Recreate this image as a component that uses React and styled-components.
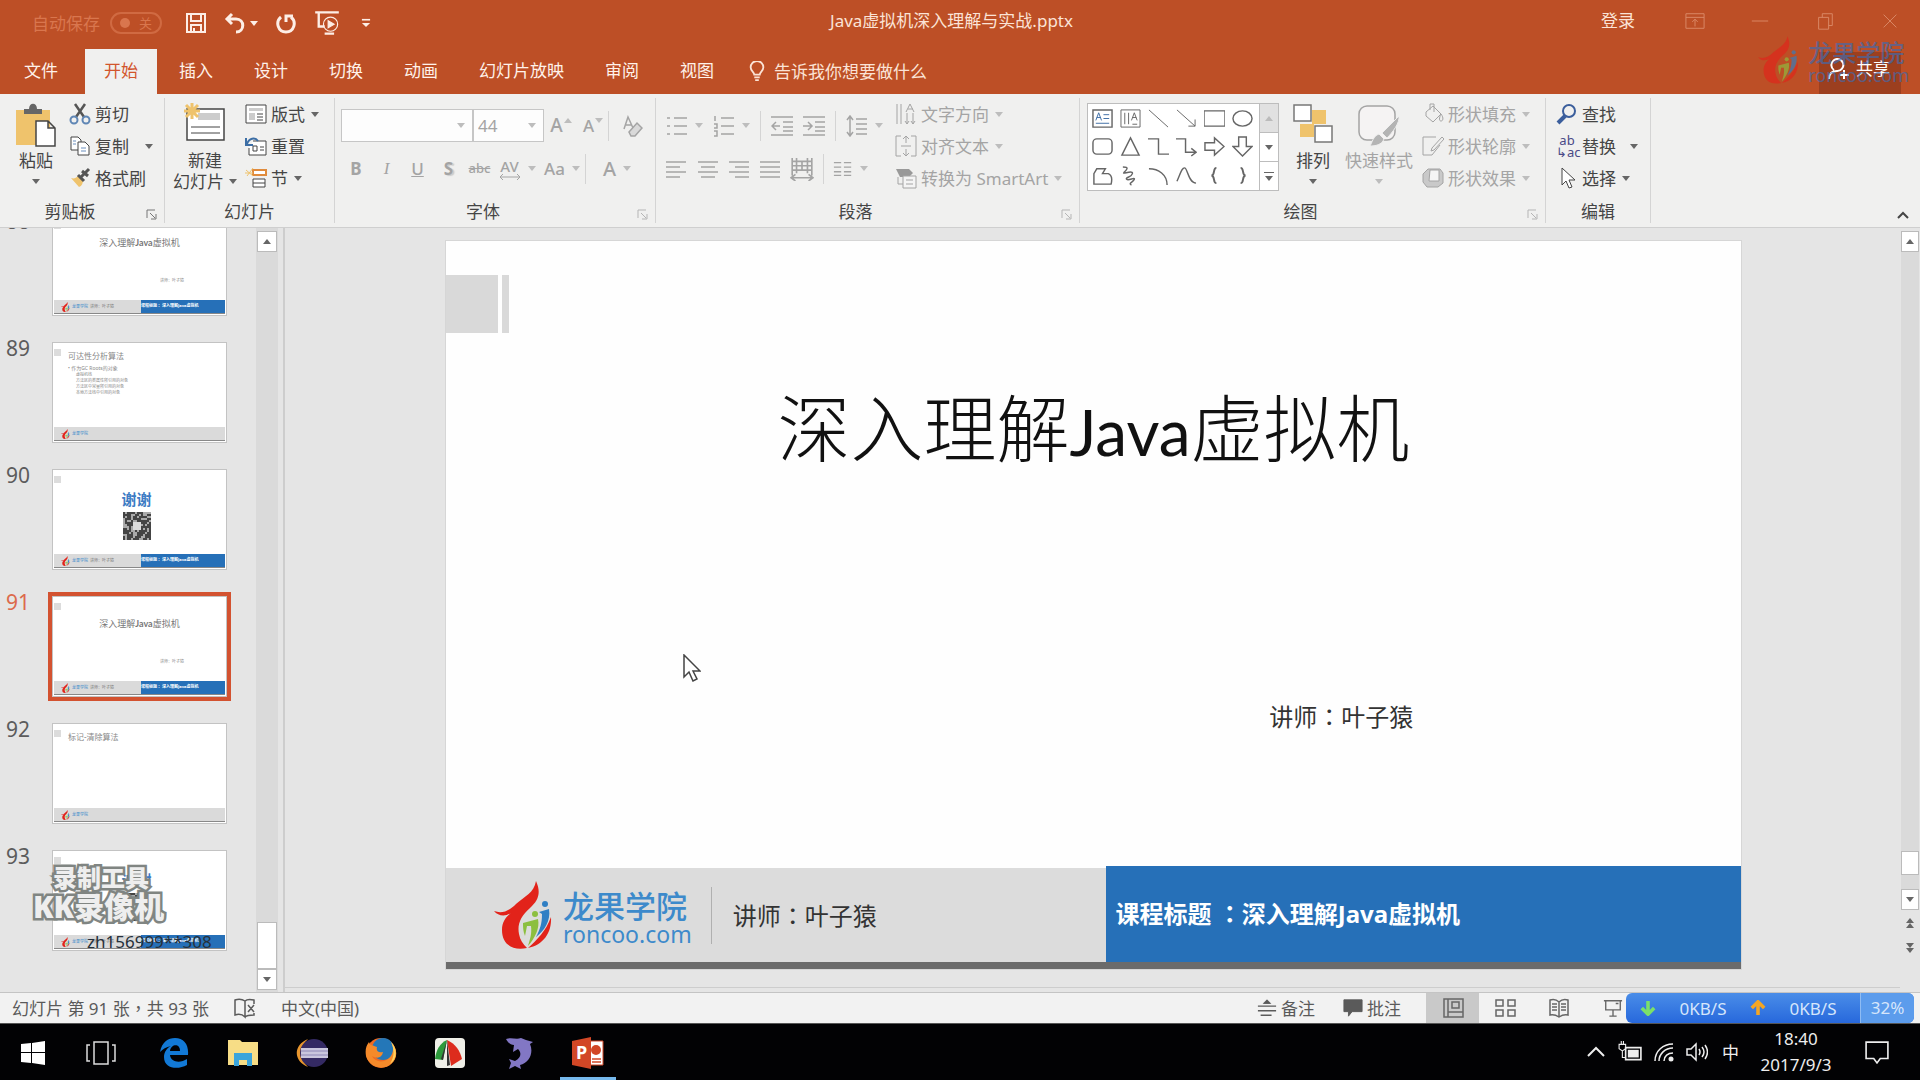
import React, {useState} from 'react';
import styled, {createGlobalStyle, css} from 'styled-components';

const COLOR = {
    ORANGE: "#bd4f26",
    RIBBON: "#f0f0ef",
    WORKSPACE: "#e5e5e5",
    TEXT: "#454545",
    DIM: "#a4a4a4",
    DIM_CARET: "#bdbdbd",
    LINE: "#d4d4d4",
    BLUE: "#2670b8",
    GOLD: "#efc36c",
};

const FONT = `"Noto Sans", "Noto Sans CJK SC", sans-serif`;

/* ---------- icons ---------- */

const ICONS = {
    save: <path d="M2 2h18v18H2zM6 2v7h10V2M6 20v-7h10v7M9 16v4" strokeWidth="2"/>,
    undo: <path d="M8 2L3 7l5 5M3 7h9c9 0 9 13 0 13" strokeWidth="3"/>,
    redo: <path d="M6 5c-6 5-3 15 5 15s11-10 5-15M11 10V4h7" strokeWidth="3"/>,
    show: <><path d="M1 2h20M4 2v12h5M9 20h8" strokeWidth="2"/><circle cx="14" cy="12" r="6"/><path d="M12 9l5 3-5 3z" fill="currentColor"/></>,
    more: <><path d="M6 7h10" strokeWidth="2"/><path d="M6 11h10l-5 5z" fill="currentColor" stroke="none"/></>,
    ribbonOptions: <path d="M1 3h20v16H1zM1 7h20M11 17v-8M8 12l3-3 3 3"/>,
    minimize: <path d="M2 11h18"/>,
    restore: <path d="M4 7h11v13H4zM8 7V3h11v13h-4"/>,
    close: <path d="M4 4l14 14M18 4L4 18"/>,
    bulb: <path d="M8 15c0-3-4-4-4-8a7 7 0 0114 0c0 4-4 5-4 8zM8 18h6M9 21h4" strokeWidth="2"/>,
    person: <path d="M1 21c0-6 4-8 8-8a6 6 0 10-3-1M12 17h9M16 12v9" strokeWidth="2"/>,
    cut: <><path d="M6 1l9 13M16 1L7 14" stroke="#555" strokeWidth="2.5"/><circle cx="5" cy="17" r="3.5" stroke="#5f86b5" strokeWidth="2"/><circle cx="17" cy="17" r="3.5" stroke="#5f86b5" strokeWidth="2"/></>,
    copy: <><path d="M2 2h7l3 3v10H2z" fill="#fff"/><path d="M9 7h7l4 4v9H9z" fill="#fff"/><path d="M4 6h3M4 9h3M12 13h5M12 16h5" stroke="#6b8fbd"/></>,
    brush: <><path d="M2 11l8 9c3-1 4-4 4-7l-5-4c-2 2-4 3-7 2z" fill={COLOR.GOLD} stroke="none"/><path d="M9 8l6 6M12 10l8-8M13 4l6 5" stroke="#555" strokeWidth="3"/></>,
    layout: <><path d="M1 2h20v18H1z" fill="#fff"/><path d="M4 5h14v3H4zM4 10h6v7H4z" fill="#ccc" stroke="none"/><path d="M12 11h6M12 14h6M12 17h6"/></>,
    reset: <><path d="M8 6h13v14H4v-7" fill="#fff"/><path d="M8 11h4v5H8zM15 12h4M15 15h4"/><path d="M1 3v7h7M2 9c2-6 8-7 11-3" stroke="#3c6ea5" strokeWidth="2"/></>,
    section: <><path d="M8 3h13v5H8z" fill="#fff" stroke="#e08b3c" strokeWidth="2"/><path d="M8 12h12v8H8zM8 16h12" fill="#fff"/><path d="M1 3l7 6M8 1L2 9M0 6h8" stroke={COLOR.GOLD}/></>,
    eraser: <><path d="M3 14L7 2l5 11M5 10h6" strokeWidth="1.5"/><path d="M8 17l8-9 5 5-7 8h-4z" fill="#d9d9d9" strokeWidth="1.5"/></>,
    bullets: <path d="M1 3h3M8 3h13M1 11h3M8 11h13M1 19h3M8 19h13" strokeWidth="1.5"/>,
    numbers: <path d="M2 1v5M1 9h3v4H1M1 16h3v5H1M8 3h13M8 11h13M8 19h13" strokeWidth="1.5"/>,
    outdent: <path d="M0 2h22M12 7h10M12 12h10M0 20h22M12 16h10M9 11H2M5 7l-4 4 4 4" strokeWidth="1.5"/>,
    indent: <path d="M0 2h22M12 7h10M12 12h10M0 20h22M12 16h10M0 11h8M5 7l4 4-4 4" strokeWidth="1.5"/>,
    spacing: <path d="M4 1v20M1 5l3-4 3 4M1 17l3 4 3-4M10 4h11M10 9h11M10 14h11M10 19h11" strokeWidth="1.5"/>,
    alignLeft: <path d="M0 4h20M0 9h14M0 14h20M0 19h14" strokeWidth="1.5"/>,
    alignCenter: <path d="M1 4h20M4 9h14M1 14h20M4 19h14" strokeWidth="1.5"/>,
    alignRight: <path d="M1 4h20M7 9h14M1 14h20M7 19h14" strokeWidth="1.5"/>,
    justify: <path d="M1 4h20M1 9h20M1 14h20M1 19h20" strokeWidth="1.5"/>,
    distribute: <path d="M2 1v16M20 1v16M2 4h18M2 8h18M2 12h18M6 1v14M16 1v14M11 4v8M1 19h20M5 16l-4 3 4 3M17 16l4 3-4 3" strokeWidth="1.5"/>,
    columns: <path d="M1 4h8M12 4h8M1 9h8M12 9h8M1 14h8M12 14h8M1 18h8M12 18h8" strokeWidth="1.5"/>,
    direction: <path d="M2 1v20M6 1v20M12 21V10M18 21V10M10 18l2 3 2-3M16 18l2 3 2-3M11 9l4-8 4 8M13 6h5"/>,
    alignText: <path d="M6 1H1v20h5M16 1h5v20h-5M11 1v7M8 4l3-3 3 3M11 14v7M8 18l3 3 3-3M6 11h10"/>,
    smartart: <><path d="M1 2h13l4 4-4 4H5z" fill="#999" stroke="none"/><path d="M8 9h13v12H8z" fill="#f4f4f4"/><path d="M3 10v7h5M11 13h7M11 17h7"/></>,
    fill: <path d="M4 9l7-6 8 8-8 8-7-6zM8 7V1h4v8M19 11c3 4 2 7 0 7s-2-3 0-7"/>,
    outline: <path d="M14 2H1v18h9l8-10M10 13L20 2l2 2-10 11-3 1z"/>,
    effect: <><path d="M6 2h12l3 4v10l-5 4H5l-4-5V7z" fill="#c9c9c9"/><path d="M8 3h9v11H7z" fill="#f5f5f5"/></>,
    find: <><circle cx="13" cy="8" r="6" stroke="#3b5e9c" strokeWidth="2"/><path d="M9 13l-7 7" stroke="#3b5e9c" strokeWidth="4"/></>,
    select: <path d="M6 1v17l4-4 3 7 3-1-3-7h6z" fill="#fff"/>,
    notes: <><path d="M1 9h20M1 14h20M4 19h12" strokeWidth="1.5"/><path d="M7 6l4-4 4 4z" fill="currentColor"/></>,
    comment: <path d="M1 2h20v13H10l-4 5v-5H1z" fill="currentColor"/>,
    spell: <path d="M11 4C8 2 4 2 1 3v15c3-1 7-1 10 2V4c2-2 5-2 9-1v4M11 20c2-2 5-2 9-2v-2M14 8l6 7M20 8l-6 7" strokeWidth="1.5"/>,
    normal: <path d="M2 2h19v18H2zM6 2v18M6 15h15M10 5h7v6h-7z" strokeWidth="1.5"/>,
    sorter: <path d="M1 3h7v6H1zM13 3h7v6h-7zM1 13h7v6H1zM13 13h7v6h-7z" strokeWidth="1.5"/>,
    reading: <path d="M11 5C8 2 5 2 2 3v15c4-1 6 0 9 2 3-2 5-3 9-2V3c-3-1-6-1-9 2v15M4 7h5M4 10h5M4 13h5M13 7h5M13 10h5M13 13h5" strokeWidth="1.5"/>,
    present: <path d="M1 3h20M3 3v10h16V3M11 13v7M7 20h8M14 6h3" strokeWidth="1.5"/>,
    up: <path d="M3 15l8-8 8 8" strokeWidth="2"/>,
    battery: <><path d="M7 7h14v11H7z" strokeWidth="1.5"/><path d="M9 9h10v7H9z" fill="currentColor" stroke="none"/><path d="M1 4h6v4l-3 2-3-2zM3 1v3M5 1v3M4 10v6h3"/></>,
    wifi: <><path d="M2 20C2 10 10 3 20 3M6 20c0-7 6-13 14-13M11 20c0-5 4-8 9-8" strokeWidth="1.5"/><circle cx="18" cy="18" r="2.5" fill="currentColor" stroke="none"/></>,
    volume: <path d="M1 8h4l5-5v16l-5-5H1zM13 8q2 3 0 6M16 6q4 5 0 10M19 4q5 7 0 14" strokeWidth="1.5"/>,
    notice: <path d="M1 2h20v15h-7l-3 4-3-4H1z" strokeWidth="1.5"/>,
    textBox: <><path d="M1 2h20v18H1z" strokeWidth="1.5"/><path d="M4 13l3-8 3 8M5 10h4M12 7h6M12 11h6M4 16h14" stroke="#3d6ca5"/></>,
    verticalBox: <path d="M1 2h20v18H1zM5 5v12M9 5v12M12 13l3-8 3 8M13 10h4M13 17h5"/>,
    line: <path d="M1 2l20 18"/>,
    arrowLine: <path d="M1 2l19 17M20 12v7h-7"/>,
    rect: <path d="M0 3h22v16H0z" strokeWidth="1.5"/>,
    oval: <ellipse cx="11" cy="11" rx="10" ry="8" strokeWidth="1.5"/>,
    roundRect: <rect x="1" y="3" width="20" height="16" rx="4" strokeWidth="1.5"/>,
    triangle: <path d="M11 2l9 18H2z" strokeWidth="1.5"/>,
    elbow: <path d="M0 3h11v16h11" strokeWidth="1.5"/>,
    elbowArrow: <path d="M0 3h10v14h11M16 13l5 4-5 4" strokeWidth="1.5"/>,
    rightArrow: <path d="M1 7h10V2l10 9-10 9v-5H1z" strokeWidth="1.5"/>,
    downArrow: <path d="M7 1h8v10h6L11 21 1 11h6z" strokeWidth="1.5"/>,
    freeform: <path d="M5 4h9l-3 5h6c5 2 4 7 3 11H2V9z" strokeWidth="1.5"/>,
    scribble: <path d="M3 2c8 0 3 4 1 6s10-3 9 1-8 4-6 6 9-3 8 0-7 4-3 6" strokeWidth="1.5"/>,
    arc: <path d="M1 4c10 0 19 6 19 17" strokeWidth="1.5"/>,
    curve: <path d="M1 17C5 8 6 3 9 3s4 16 12 16" strokeWidth="1.5"/>,
    braceLeft: <path d="M13 3c-4 0-1 7-5 8 4 1 1 8 5 8" strokeWidth="2"/>,
    braceRight: <path d="M9 3c4 0 1 7 5 8-4 1-1 8-5 8" strokeWidth="2"/>,
};

const Svg = styled.svg`
  display: block;
  flex: none;
  fill: none;
  stroke: currentColor;
`

function Icon({name, size = 22}) {
    return <Svg viewBox="0 0 22 22" width={size} height={size} aria-hidden="true">{ICONS[name]}</Svg>;
}

function Caret({flip}) {
    return (
        <Svg className="caret" viewBox="0 0 8 5" width="8" height="5" aria-hidden="true">
            <path d={flip ? "M0 5h8L4 0z" : "M0 0h8L4 5z"} fill="currentColor" stroke="none"/>
        </Svg>
    );
}

function Flame({width, height}) {
    return (
        <Svg viewBox="0 0 60 68" width={width} height={height} aria-hidden="true">
            <path d="M42 0c5 11 3 19-6 27C27 35 23 43 25 53c1 6 4 10 8 14-15 3-25-4-25-18 0-8 4-13 9-17-6 4-13 3-17-2 8 3 15 0 22-7C31 15 40 12 42 0z" fill="#e2231a" stroke="none"/>
            <path d="M57 36c1 16-8 28-23 31 9-8 18-17 23-31z" fill="#e2231a" stroke="none"/>
            <circle cx="51" cy="23" r="3" fill="#2f7fc4" stroke="none"/>
            <path d="M45 31l10-3c2 12-5 22-13 28 4-8 6-13 6-23z" fill="#2f7fc4" stroke="none"/>
            <circle cx="41" cy="33" r="3" fill="#8cbf3f" stroke="none"/>
            <path d="M29 42l15-4c2 9-3 19-10 27 2-7 4-12 3-20h-4l-2 10c-2-5-2-9-2-13z" fill="#8cbf3f" stroke="none"/>
        </Svg>
    );
}

const PasteIcon = () => (
    <Svg viewBox="0 0 42 44" width="42" height="44" aria-hidden="true">
        <path d="M1 7h34v35H1z" fill={COLOR.GOLD} stroke="none"/>
        <path d="M9 11V6h5c0-7 8-7 8 0h5v5z" fill="#666" stroke="none"/>
        <path d="M21 18h12l7 7v18H21zM33 18v7h7" fill="#fff" strokeWidth="1.5"/>
    </Svg>
);

const NewSlideIcon = () => (
    <Svg viewBox="0 0 42 44" width="42" height="44" aria-hidden="true">
        <path d="M3 6h37v31H3z" fill="#fff" strokeWidth="1.5"/>
        <path d="M14 10h22v7H14z" fill="#ccc" stroke="none"/>
        <path d="M7 24h29M7 30h29"/>
        <path d="M8 0v16M0 8h16M2 2l12 12M14 2L2 14" stroke={COLOR.GOLD} strokeWidth="3"/>
    </Svg>
);

const ArrangeIcon = () => (
    <Svg viewBox="0 0 42 44" width="42" height="44" aria-hidden="true">
        <path d="M20 7h14v14H20zM8 21h14v13H8z" fill={COLOR.GOLD} stroke="none"/>
        <path d="M2 2h17v16H2zM23 23h17v16H23z" fill="#fff" stroke="#777" strokeWidth="1.5"/>
    </Svg>
);

const StyleIcon = () => (
    <Svg viewBox="0 0 42 44" width="42" height="44" aria-hidden="true">
        <rect x="1" y="3" width="36" height="34" rx="8" fill="#f5f3f3" strokeWidth="1.5"/>
        <path d="M12 43c2-3 3-10 9-12l5 5c-2 6-9 7-14 7zM24 30l17-17c1 7-7 17-12 22z" fill="#b4b4b4" stroke="#eee"/>
    </Svg>
);

/* ---------- title bar and tabs ---------- */

const TABS = ["文件", "开始", "插入", "设计", "切换", "动画", "幻灯片放映", "审阅", "视图"];

function Header() {
    const [tab, setTab] = useState("开始");

    return (
        <HeaderBar>
            <TitleRow>
                <QuickAccess>
                    <AutoSave>
                        自动保存
                        <span className="frame"><input type="checkbox"/><small>关</small></span>
                    </AutoSave>
                    <QuickButton aria-label="保存"><Icon name="save"/></QuickButton>
                    <QuickButton aria-label="撤消"><Icon name="undo"/><Caret/></QuickButton>
                    <QuickButton aria-label="重复"><Icon name="redo"/></QuickButton>
                    <QuickButton aria-label="从头开始"><Icon name="show" size={26}/></QuickButton>
                    <QuickButton aria-label="自定义"><Icon name="more" size={18}/></QuickButton>
                </QuickAccess>
                <FileName>Java虚拟机深入理解与实战.pptx</FileName>
                <WindowControls>
                    <a href="#login">登录</a>
                    <button aria-label="功能区选项"><Icon name="ribbonOptions" size={20}/></button>
                    <button aria-label="最小化"><Icon name="minimize" size={20}/></button>
                    <button aria-label="还原"><Icon name="restore" size={20}/></button>
                    <button aria-label="关闭"><Icon name="close" size={20}/></button>
                </WindowControls>
            </TitleRow>
            <TabRow>
                {TABS.map(name => (
                    <Tab key={name} $active={name === tab} onClick={() => setTab(name)}>{name}</Tab>
                ))}
                <TellMe><Icon name="bulb" size={20}/>告诉我你想要做什么</TellMe>
                <Share><Icon name="person"/>共享</Share>
            </TabRow>
            <CornerMark>
                <Flame width={42} height={48}/>
                <div><b>龙果学院</b><i>roncoo.com</i></div>
            </CornerMark>
        </HeaderBar>
    );
}

/* ---------- ribbon ---------- */

function Command({icon, label, caret, gap, dim}) {
    return (
        <CommandButton $dim={dim} $gap={gap}>
            {icon === "replace" ? <ReplaceMark><span>ab</span><span>↳ac</span></ReplaceMark> : <Icon name={icon}/>}
            <span>{label}</span>
            {caret && <Caret/>}
        </CommandButton>
    );
}

function Group({label, width, start, launcher, dimLauncher, children}) {
    return (
        <GroupBox $width={width}>
            <GroupBody $start={start}>{children}</GroupBody>
            <GroupFoot>
                <span>{label}</span>
                {launcher && (
                    <Launcher $dim={dimLauncher} aria-label={label + "设置"}>
                        <Svg viewBox="0 0 11 11" width="11" height="11"><path d="M1 9V1h8M4 4l5 5M10 5v5H5"/></Svg>
                    </Launcher>
                )}
            </GroupFoot>
        </GroupBox>
    );
}

const SHAPES = [
    "textBox", "verticalBox", "line", "arrowLine", "rect", "oval",
    "roundRect", "triangle", "elbow", "elbowArrow", "rightArrow", "downArrow",
    "freeform", "scribble", "arc", "curve", "braceLeft", "braceRight",
];

function Ribbon() {
    return (
        <RibbonBar>
            <Group label="剪贴板" width={165} start={12} launcher>
                <BigButton $width={48}><PasteIcon/><span>粘贴</span><span><Caret/></span></BigButton>
                <CommandList $start={9}>
                    <Command icon="cut" label="剪切"/>
                    <Command icon="copy" label="复制" caret gap={12}/>
                    <Command icon="brush" label="格式刷"/>
                </CommandList>
            </Group>
            <Group label="幻灯片" width={170} start={7}>
                <BigButton $width={66}><NewSlideIcon/><span>新建</span><span>幻灯片<Caret/></span></BigButton>
                <CommandList $start={7}>
                    <Command icon="layout" label="版式" caret/>
                    <Command icon="reset" label="重置"/>
                    <Command icon="section" label="节" caret/>
                </CommandList>
            </Group>
            <Group label="字体" width={321} start={6} launcher dimLauncher>
                <ToolRows>
                    <ToolRow>
                        <Combo $width={132}><select aria-label="字体" disabled><option></option></select><Caret/></Combo>
                        <Combo $width={71}><select aria-label="字号" disabled><option>44</option></select><Caret/></Combo>
                        <Tool $width={34} aria-label="增大字号"><Letter $size={19}>A</Letter><sup><Caret flip/></sup></Tool>
                        <Tool $width={30} aria-label="减小字号"><Letter $size={17}>A</Letter><sup><Caret/></sup></Tool>
                        <Divider/>
                        <Tool $width={46} aria-label="清除格式"><Icon name="eraser"/></Tool>
                    </ToolRow>
                    <ToolRow>
                        <Tool $width={30} aria-label="加粗"><Letter $size={17} $bold>B</Letter></Tool>
                        <Tool $width={31} aria-label="倾斜"><Letter $size={17} $italic>I</Letter></Tool>
                        <Tool $width={31} aria-label="下划线"><Letter $size={17} $line="underline">U</Letter></Tool>
                        <Tool $width={31} aria-label="阴影"><Letter $size={17} $bold $shadow>S</Letter></Tool>
                        <Tool $width={31} aria-label="删除线"><Letter $size={13} $line="line-through">abc</Letter></Tool>
                        <Tool $width={44} aria-label="字符间距">
                            <SpacingMark>
                                <Letter $size={15}>AV</Letter>
                                <Svg viewBox="0 0 22 6" width="22" height="6"><path d="M1 3h20M4 0L1 3l3 3M18 0l3 3-3 3"/></Svg>
                            </SpacingMark>
                            <Caret/>
                        </Tool>
                        <Tool $width={46} aria-label="更改大小写"><Letter $size={17}>Aa</Letter><Caret/></Tool>
                        <Divider/>
                        <Tool $width={62} aria-label="字体颜色"><Letter $size={20}>A</Letter><Caret/></Tool>
                    </ToolRow>
                </ToolRows>
            </Group>
            <Group label="段落" width={424} start={10} launcher dimLauncher>
                <ToolRows>
                    <ToolRow $gap={10}>
                        <Tool aria-label="项目符号"><Icon name="bullets"/><Caret/></Tool>
                        <Tool aria-label="编号"><Icon name="numbers"/><Caret/></Tool>
                        <Divider/>
                        <Tool aria-label="降低列表级别"><Icon name="outdent"/></Tool>
                        <Tool aria-label="提高列表级别"><Icon name="indent"/></Tool>
                        <Divider/>
                        <Tool aria-label="行距"><Icon name="spacing"/><Caret/></Tool>
                    </ToolRow>
                    <ToolRow $gap={9}>
                        <Tool aria-label="左对齐"><Icon name="alignLeft"/></Tool>
                        <Tool aria-label="居中"><Icon name="alignCenter"/></Tool>
                        <Tool aria-label="右对齐"><Icon name="alignRight"/></Tool>
                        <Tool aria-label="两端对齐"><Icon name="justify"/></Tool>
                        <Tool aria-label="分散对齐"><Icon name="distribute" size={24}/></Tool>
                        <Divider/>
                        <Tool aria-label="分栏"><Icon name="columns" size={20}/><Caret/></Tool>
                    </ToolRow>
                </ToolRows>
                <CommandList $start={12}>
                    <Command icon="direction" label="文字方向" caret dim/>
                    <Command icon="alignText" label="对齐文本" caret dim/>
                    <Command icon="smartart" label="转换为 SmartArt" caret dim/>
                </CommandList>
            </Group>
            <Group label="绘图" width={466} start={7} launcher dimLauncher>
                <Gallery>
                    <div className="shapes">
                        {SHAPES.map(name => <button key={name} aria-label={name}><Icon name={name} size={21}/></button>)}
                    </div>
                    <div className="scroll">
                        <button aria-label="上一行" disabled><Caret flip/></button>
                        <button aria-label="下一行"><Caret/></button>
                        <button aria-label="其他形状"><hr/><Caret/></button>
                    </div>
                </Gallery>
                <BigButton $width={68}><ArrangeIcon/><span>排列</span><span><Caret/></span></BigButton>
                <BigButton $width={64} $dim><StyleIcon/><span>快速样式</span><span><Caret/></span></BigButton>
                <CommandList $start={11}>
                    <Command icon="fill" label="形状填充" caret dim/>
                    <Command icon="outline" label="形状轮廓" caret dim/>
                    <Command icon="effect" label="形状效果" caret dim/>
                </CommandList>
            </Group>
            <Group label="编辑" width={105} start={5}>
                <CommandList $start={5}>
                    <Command icon="find" label="查找"/>
                    <Command icon="replace" label="替换" caret gap={10}/>
                    <Command icon="select" label="选择" caret/>
                </CommandList>
            </Group>
            <Collapse aria-label="折叠功能区">
                <Svg viewBox="0 0 12 8" width="12" height="8"><path d="M1 7l5-5 5 5" strokeWidth="2"/></Svg>
            </Collapse>
        </RibbonBar>
    );
}

/* ---------- slides ---------- */

const SLIDES = [
    {no: 88, kind: "cover"},
    {
        no: 89, kind: "text", title: "可达性分析算法", lead: "作为GC Roots的对象",
        lines: ["虚拟机栈", "方法区的类属性所引用的对象", "方法区中常量所引用的对象", "本地方法栈中引用的对象"],
    },
    {no: 90, kind: "thanks"},
    {no: 91, kind: "cover"},
    {no: 92, kind: "text", title: "标记-清除算法"},
    {no: 93, kind: "thanks"},
];

// fixed pattern for the little code picture
const QR = Array.from({length: 196}, (_, i) => i).filter(i => (i * 7 + (i >> 2) * 5 + (i % 13) * (i % 5)) % 9 < 6);

// full-width punctuation that sits in the middle of its cell
function Mid({children}) {
    return <Centred lang="zh-TW">{children}</Centred>;
}

function Thumb({slide}) {
    return (
        <>
            <ThumbMark/>
            {slide.kind === "cover" && <><CoverTitle>深入理解<b>Java</b>虚拟机</CoverTitle><CoverBy>讲师：叶子猿</CoverBy></>}
            {slide.kind === "text" && (
                <TextSlide>
                    <h4>{slide.title}</h4>
                    {slide.lead && <p>• {slide.lead}</p>}
                    {slide.lines && <ul>{slide.lines.map(line => <li key={line}>{line}</li>)}</ul>}
                </TextSlide>
            )}
            {slide.kind === "thanks" && (
                <Thanks>
                    <b>谢谢</b>
                    <Svg viewBox="0 0 14 14" width="28" height="28">
                        <path d="M0 0h14v14H0z" fill="#aaa" stroke="none"/>
                        {QR.map(i => <rect key={i} x={i % 14} y={Math.floor(i / 14)} width="1" height="1" fill="#444" stroke="none"/>)}
                        <path d="M5 5h4v4H5z" fill="#ddd" stroke="none"/>
                    </Svg>
                </Thanks>
            )}
            <ThumbFoot>
                <Flame width={9} height={10}/>
                <em>龙果学院</em>
                {slide.kind !== "text" && <><span>讲师：叶子猿</span><strong>课程标题 ：深入理解Java虚拟机</strong></>}
            </ThumbFoot>
        </>
    );
}

function Workspace() {
    const [current, setCurrent] = useState(91);

    return (
        <Main>
            <ThumbPane>
                {SLIDES.map(slide => (
                    <ThumbRow key={slide.no} $active={slide.no === current}>
                        <span>{slide.no}</span>
                        <ThumbButton $active={slide.no === current} aria-label={"幻灯片 " + slide.no}
                                     onClick={() => setCurrent(slide.no)}>
                            <Thumb slide={slide}/>
                        </ThumbButton>
                    </ThumbRow>
                ))}
                <Recorder>
                    <span>录制工具</span>
                    <strong>KK录像机</strong>
                    <small>zh156999**308</small>
                </Recorder>
            </ThumbPane>
            <ScrollBar $width={22}>
                <button aria-label="向上滚动"><Caret flip/></button>
                <i/>
                <b/>
                <button aria-label="向下滚动"><Caret/></button>
            </ScrollBar>
            <Splitter/>
            <Stage>
                <Slide>
                    <SlideMark><i/><i/></SlideMark>
                    <SlideTitle>深入理解<span>Java</span>虚拟机</SlideTitle>
                    <Lecturer>讲师<Mid>：</Mid>叶子猿</Lecturer>
                    <SlideFoot>
                        <FootLeft>
                            <Flame width={60} height={68}/>
                            <Brand><b>龙果学院</b><span>roncoo.com</span></Brand>
                            <p>讲师<Mid>：</Mid>叶子猿</p>
                        </FootLeft>
                        <FootRight>课程标题 <Mid>：</Mid>深入理解Java虚拟机</FootRight>
                    </SlideFoot>
                </Slide>
                <Pointer viewBox="0 0 18 28" width="18" height="28">
                    <path d="M1 1v22l5-5 4 9 4-2-4-8h7z" fill="#fff" stroke="#444" strokeWidth="1.5"/>
                </Pointer>
            </Stage>
            <ScrollBar $width={20} $paged>
                <button aria-label="向上滚动"><Caret flip/></button>
                <i/>
                <b/>
                <u/>
                <button aria-label="向下滚动"><Caret/></button>
                <button className="page" aria-label="上一张幻灯片"><Caret flip/><Caret flip/></button>
                <button className="page" aria-label="下一张幻灯片"><Caret/><Caret/></button>
            </ScrollBar>
        </Main>
    );
}

/* ---------- bottom bars ---------- */

function Arrow({down}) {
    return (
        <Svg viewBox="0 0 18 18" width="16" height="16" aria-hidden="true">
            <path d={down ? "M9 1v15M2 9l7 7 7-7" : "M9 17V2M2 9l7-7 7 7"} stroke={down ? "#7be06a" : "#f5a623"} strokeWidth="4"/>
        </Svg>
    );
}

function Footer() {
    return (
        <StatusBar>
            <StatusText>幻灯片 第 91 张<Mid>，</Mid>共 93 张</StatusText>
            <StatusButton aria-label="拼写检查"><Icon name="spell"/></StatusButton>
            <StatusText>中文(中国)</StatusText>
            <StatusTools>
                <StatusButton><Icon name="notes" size={20}/>备注</StatusButton>
                <StatusButton><Icon name="comment" size={20}/>批注</StatusButton>
            </StatusTools>
            <Views>
                <button className="on" aria-label="普通视图"><Icon name="normal"/></button>
                <button aria-label="幻灯片浏览"><Icon name="sorter"/></button>
                <button aria-label="阅读视图"><Icon name="reading"/></button>
                <button aria-label="幻灯片放映"><Icon name="present" size={20}/></button>
            </Views>
            <NetMeter>
                <Arrow down/><span>0KB/S</span>
                <Arrow/><span>0KB/S</span>
                <b>32%</b>
            </NetMeter>
        </StatusBar>
    );
}

const APPS = {
    "任务视图": <path d="M9 5h14v22H9zM5 8H2v16h3M27 8h3v16h-3" stroke="#ddd" strokeWidth="1.5"/>,
    Edge: <path d="M2 15C4 5 10 1 17 1c9 0 14 7 13 17H12c1 8 11 8 17 4v6c-9 5-23 4-23-8 0-5 3-9 7-11-5 1-8 3-11 6zm10-1h10c0-8-9-7-10 0z" fill="#1279d6" stroke="none" fillRule="evenodd"/>,
    "资源管理器": <>
        <path d="M1 3h12l2 2h16v23H1z" fill="#f7dd86" stroke="none"/>
        <path d="M7 16h18v13h-5v-6h-8v6H7z" fill="#3ba5dc" stroke="none"/>
    </>,
    Eclipse: <>
        <path d="M12 2C-3 8-3 24 12 30 3 22 3 10 12 2z" fill="#e8962e" stroke="none"/>
        <circle cx="18" cy="16" r="14" fill="#342a63" stroke="none"/>
        <path d="M5 11h27v10H5z" fill="#c9c6dd" stroke="none"/>
        <path d="M5 14h27M5 18h27" stroke="#8c86b5"/>
    </>,
    Firefox: <>
        <circle cx="16" cy="16" r="15" fill="#ef6a22" stroke="none"/>
        <circle cx="18" cy="12" r="11" fill="#2477b8" stroke="none"/>
        <path d="M4 5c1 4 4 3 8 5-1 4 1 6 6 5-1 6-6 7-11 4 4 8 16 7 20-2 2-5 1-9-1-12 7 7 7 16 0 22-8 7-22 3-25-8-1-6 0-10 3-14z" fill="#f58a2a" stroke="none"/>
        <path d="M26 5c7 7 6 17-1 22 4-7 5-13 1-22z" fill="#ffd25e" stroke="none"/>
    </>,
    FastStone: <>
        <rect x="1" y="1" width="30" height="30" rx="4" fill="#efefe8" stroke="none"/>
        <path d="M13 3C6 6 2 13 1 22l8 1z" fill="#2d9a3c" stroke="none"/>
        <path d="M13 3c9 4 13 11 15 19l-11 7z" fill="#dd2c1d" stroke="none"/>
        <path d="M13 3L9 23l-2-1zM13 3v26l3-1z" fill="#333" stroke="none"/>
    </>,
    "海豚": <path d="M3 2c6-2 10 1 15-1l5 2 7 2-3 2c4 9-1 19-10 21l1 4-6-3-6 3 2-6-2-4 6 2c6-3 7-8 3-12l-5 3 1-7C8 8 5 6 3 2z" fill="#8277c4" stroke="none"/>,
    PowerPoint: <>
        <path d="M16 4h15v24H16z" fill="#fff" stroke="#d24726"/>
        <path d="M20 22h9M20 25h9" stroke="#d24726" strokeWidth="1.5"/>
        <circle cx="24" cy="13" r="5" fill="#d24726" stroke="none"/>
        <path d="M0 4l19-4v32L0 28z" fill="#d24726" stroke="none"/>
        <text x="4" y="22" fill="#fff" stroke="none" fontSize="18" fontWeight="700">P</text>
    </>,
};

function TaskBar() {
    return (
        <Task>
            <AppButton $width={66} aria-label="开始">
                <Svg viewBox="0 0 24 24" width="24" height="24">
                    <path d="M0 3l10-1v9H0zM11 2l13-2v11H11zM0 12h10v10L0 21zM11 12h13v12l-13-2z" fill="#fff" stroke="none"/>
                </Svg>
            </AppButton>
            {Object.keys(APPS).map((name, idx) => (
                <AppButton key={name} $width={idx ? 69 : 70} $first={!idx} $open={name === "PowerPoint"} aria-label={name}>
                    <Svg viewBox="0 0 32 32" width="32" height="32">{APPS[name]}</Svg>
                </AppButton>
            ))}
            <Tray>
                <Icon name="up"/>
                <Icon name="battery" size={24}/>
                <Icon name="wifi"/>
                <Icon name="volume"/>
                <span>中</span>
                <time>18:40<br/>2017/9/3</time>
                <Icon name="notice" size={24}/>
            </Tray>
        </Task>
    );
}

function App() {
    return (
        <Page lang="zh-CN">
            <GlobalStyle/>
            <Header/>
            <Ribbon/>
            <Workspace/>
            <Footer/>
            <TaskBar/>
        </Page>
    );
}

const GlobalStyle = createGlobalStyle`
  * {
    box-sizing: border-box;
  }

  body {
    margin: 0;
    overflow: hidden;
  }

  button, select, input {
    font: inherit;
    color: inherit;
    background: none;
    border: 0;
    padding: 0;
    margin: 0;
  }

  p, h1, h4, ul {
    margin: 0;
    padding: 0;
  }

  a {
    color: inherit;
    text-decoration: none;
  }
`

const Page = styled.div`
  height: 100vh;
  display: flex;
  flex-direction: column;
  overflow: hidden;
  font-family: ${FONT};
  font-size: 17px;
  line-height: 21px;
  color: ${COLOR.TEXT};
  white-space: nowrap;
`

const Centred = styled.span`
  font-family: "Noto Sans CJK TC", sans-serif;
`

const HeaderBar = styled.header`
  flex: none;
  position: relative;
  background: ${COLOR.ORANGE};
  color: #fbe3d6;
`

const TitleRow = styled.div`
  height: 49px;
  padding-bottom: 8px;
  display: grid;
  grid-template-columns: 1fr auto 1fr;
  align-items: center;
`

const QuickAccess = styled.div`
  display: flex;
  align-items: center;
  gap: 17px;
  padding: 5px 0 0 32px;
`

const AutoSave = styled.label`
  display: flex;
  align-items: center;
  gap: 10px;
  margin-right: 6px;
  color: #d9764e;

  .frame {
    width: 52px;
    height: 22px;
    padding: 0 8px;
    border: 2px solid #d06a42;
    border-radius: 11px;
    display: flex;
    align-items: center;
    justify-content: space-between;
  }

  input {
    appearance: none;
    width: 10px;
    height: 10px;
    border-radius: 5px;
    background: #d9764e;
  }

  small {
    font-size: 13px;
    line-height: 18px;
  }
`

const QuickButton = styled.button`
  display: flex;
  align-items: center;
  gap: 4px;
  color: #fdeee6;
`

const FileName = styled.div`
  padding-right: 17px;
`

const WindowControls = styled.div`
  display: flex;
  align-items: center;
  justify-content: flex-end;
  gap: 45px;
  padding-right: 20px;
  color: #dc8c6b;

  a {
    color: #fbe3d6;
    margin-right: 5px;
  }
`

const TabRow = styled.nav`
  height: 45px;
  display: flex;
  gap: 3px;
`

const Tab = styled.button`
  padding: 0 19px 3px;
  color: ${props => props.$active ? "#d2552c" : "#fff2ea"};
  background: ${props => props.$active ? COLOR.RIBBON : "none"};

  &:first-child {
    padding: 0 24px 3px;
  }
`

const TellMe = styled.button`
  display: flex;
  align-items: center;
  gap: 7px;
  margin-left: 11px;
  padding-bottom: 1px;
`

const Share = styled.button`
  display: flex;
  align-items: center;
  gap: 6px;
  height: 42px;
  padding: 0 11px 9px 9px;
  margin: 3px 19px 0 auto;
  background: #9c3f1f;
  color: #fff;
`

const CornerMark = styled.div`
  position: absolute;
  right: 11px;
  top: 36px;
  display: flex;
  gap: 8px;
  opacity: 0.65;
  pointer-events: none;
  color: #3c6cb4;

  div {
    display: flex;
    flex-direction: column;
    padding-top: 2px;
  }

  b {
    font-size: 24px;
    line-height: 30px;
    font-weight: 500;
  }

  i {
    font-size: 18px;
    line-height: 14px;
    font-style: normal;
  }
`

const RibbonBar = styled.div`
  flex: none;
  display: flex;
  background: ${COLOR.RIBBON};
  border-bottom: 1px solid #cfcfcf;
  padding: 4px 0;
`

const GroupBox = styled.section`
  flex: none;
  width: ${props => props.$width}px;
  border-right: 1px solid ${COLOR.LINE};
`

const GroupBody = styled.div`
  height: 101px;
  display: flex;
  align-items: flex-start;
  padding-left: ${props => props.$start}px;
`

const GroupFoot = styled.div`
  height: 24px;
  display: flex;
  align-items: center;

  > span {
    flex: 1;
    text-align: center;
  }
`

const Launcher = styled.button`
  width: 24px;
  padding: 9px 6px 3px;
  color: ${props => props.$dim ? "#b5b5b5" : "#777"};
`

const BigButton = styled.button`
  width: ${props => props.$width}px;
  padding-top: 5px;
  display: flex;
  flex-direction: column;
  align-items: center;
  color: ${props => props.$dim ? COLOR.DIM : COLOR.TEXT};

  svg + span {
    margin-top: 3px;
  }

  span {
    height: 21px;
    display: flex;
    align-items: center;
    gap: 5px;
  }

  .caret {
    color: ${props => props.$dim ? COLOR.DIM_CARET : "#666"};
  }
`

const CommandList = styled.div`
  display: flex;
  flex-direction: column;
  align-items: flex-start;
  margin-left: ${props => props.$start}px;
`

const CommandButton = styled.button`
  height: 32px;
  display: flex;
  align-items: center;
  gap: 4px;
  color: ${props => props.$dim ? COLOR.DIM : COLOR.TEXT};

  .caret {
    margin-left: ${props => props.$gap || 2}px;
    color: ${props => props.$dim ? COLOR.DIM_CARET : "#666"};
  }
`

const ReplaceMark = styled.span`
  width: 22px;
  display: flex;
  flex-direction: column;
  font-size: 13px;
  line-height: 12px;
  color: #4a4a86;
`

const ToolRows = styled.div`
  display: flex;
  flex-direction: column;
  gap: 10px;
  padding-top: 11px;
  color: ${COLOR.DIM};

  .caret {
    color: ${COLOR.DIM_CARET};
  }
`

const ToolRow = styled.div`
  height: 33px;
  display: flex;
  align-items: center;
  gap: ${props => props.$gap || 0}px;
`

const Combo = styled.div`
  width: ${props => props.$width}px;
  height: 33px;
  padding: 0 7px 0 4px;
  display: flex;
  align-items: center;
  background: #fdfdfd;
  border: 1px solid #c6c6c6;

  select {
    flex: 1;
    min-width: 0;
    appearance: none;
    opacity: 1;
  }
`

const Tool = styled.button`
  width: ${props => props.$width ? props.$width + "px" : "auto"};
  display: flex;
  align-items: center;
  justify-content: center;
  gap: 7px;

  sup {
    margin: 0 0 10px -6px;
    line-height: 0;
  }
`

const Letter = styled.span`
  font-size: ${props => props.$size}px;
  font-weight: ${props => props.$bold ? 700 : 500};
  font-style: ${props => props.$italic ? "italic" : "normal"};
  font-family: ${props => props.$italic ? `"Liberation Serif", serif` : "inherit"};
  text-decoration: ${props => props.$line || "none"};
  ${props => props.$shadow && css`text-shadow: 2px 1px 1px #ccc;`}
`

const SpacingMark = styled.span`
  display: flex;
  flex-direction: column;
  align-items: center;
  line-height: 16px;
`

const Divider = styled.i`
  width: 1px;
  height: 30px;
  background: ${COLOR.LINE};
`

const Gallery = styled.div`
  width: 192px;
  height: 88px;
  margin-top: 5px;
  display: flex;
  background: #fff;
  border: 1px solid #bdbdbd;
  color: #666;

  .shapes {
    flex: 1;
    display: grid;
    grid-template-columns: repeat(6, 1fr);
    justify-items: center;
    align-items: center;
    padding-right: 3px;
  }

  .scroll {
    width: 19px;
    display: flex;
    flex-direction: column;
    border-left: 1px solid #bdbdbd;
  }

  .scroll button {
    flex: 1;
    display: flex;
    flex-direction: column;
    align-items: center;
    justify-content: center;
    gap: 3px;
    border-bottom: 1px solid #bdbdbd;
  }

  .scroll button:disabled {
    background: #e1e1e1;
    color: #bbb;
  }

  .scroll button:last-child {
    border-bottom: 0;
  }

  hr {
    width: 10px;
    margin: 0;
    border: 0;
    border-top: 1px solid #666;
  }
`

const Collapse = styled.button`
  margin: 0 11px 4px auto;
  align-self: flex-end;
`

const Main = styled.main`
  flex: 1;
  min-height: 0;
  display: flex;
  background: ${COLOR.WORKSPACE};
  border-bottom: 1px solid #c4c4c4;
`

const ThumbPane = styled.aside`
  flex: none;
  position: relative;
  width: 256px;
  padding: 0 0 41px 6px;
  display: flex;
  flex-direction: column;
  justify-content: flex-end;
  gap: 26px;
  overflow: hidden;
`

const ThumbRow = styled.div`
  display: flex;
  font-size: 21px;
  line-height: 12px;
  color: ${props => props.$active ? "#dc6a4c" : "#5c5c5c"};

  > span {
    width: 46px;
  }
`

const ThumbButton = styled.button`
  width: 175px;
  height: 101px;
  padding: 1px;
  position: relative;
  display: flex;
  flex-direction: column;
  text-align: left;
  color: #777;
  background: #fff;
  border: 1px solid #c3c3c3;
  outline: ${props => props.$active ? "4px solid #d35230" : "none"};
`

const ThumbMark = styled.i`
  width: 7px;
  height: 7px;
  margin-top: 5px;
  background: #dcdcdc;
`

const CoverTitle = styled.div`
  padding-top: 8px;
  text-align: center;
  font-family: Lato, "Noto Sans CJK SC", sans-serif;
  font-size: 9px;
  line-height: 12px;
`

const CoverBy = styled.div`
  padding: 29px 0 0 106px;
  font-size: 4px;
  line-height: 6px;
  color: #888;
`

const TextSlide = styled.div`
  padding-left: 14px;
  font-size: 5px;
  line-height: 7px;
  color: #888;

  h4 {
    font-size: 8px;
    line-height: 10px;
    font-weight: 400;
    margin: -5px 0 4px;
  }

  ul {
    list-style: none;
    padding-left: 8px;
    font-size: 4px;
    line-height: 6px;
  }
`

const Thanks = styled.div`
  display: flex;
  flex-direction: column;
  align-items: center;
  gap: 5px;
  padding: 8px 6px 0 0;

  b {
    font-size: 15px;
    line-height: 16px;
    color: #3d7cc4;
  }
`

const ThumbFoot = styled.div`
  height: 14px;
  margin-top: auto;
  padding-left: 7px;
  display: flex;
  align-items: center;
  gap: 2px;
  background: #dadada;
  border-bottom: 1px solid #888;
  font-size: 4px;
  line-height: 6px;

  em {
    font-style: normal;
    color: #3d8acb;
  }

  strong {
    width: 84px;
    height: 13px;
    margin-left: auto;
    line-height: 12px;
    color: #fff;
    background: ${COLOR.BLUE};
  }
`

const Recorder = styled.div`
  position: absolute;
  left: 33px;
  bottom: 30px;
  display: flex;
  flex-direction: column;
  pointer-events: none;
  font-weight: 900;
  color: #eee;
  paint-order: stroke fill;
  -webkit-text-stroke: 5px #808582;

  span {
    font-size: 24px;
    line-height: 28px;
    padding-left: 20px;
  }

  strong {
    font-size: 30px;
    line-height: 30px;
    font-weight: 900;
  }

  small {
    font-size: 17px;
    line-height: 40px;
    font-weight: 400;
    padding-left: 54px;
    color: #26303a;
    -webkit-text-stroke: 0;
  }
`

const ScrollBar = styled.div`
  flex: none;
  width: ${props => props.$width}px;
  padding: 3px 1px ${props => props.$paged ? 32 : 2}px;
  display: flex;
  flex-direction: column;
  background: ${props => props.$paged ? "none" : "#dadada"};
  color: #666;

  button {
    height: 21px;
    display: flex;
    flex-direction: column;
    align-items: center;
    justify-content: center;
    background: #fff;
    border: 1px solid #bbb;
  }

  i {
    flex: 1;
    background: #dadada;
  }

  b {
    height: ${props => props.$paged ? 24 : 47}px;
    background: #fff;
    border: 1px solid #bbb;
  }

  u {
    height: 14px;
    background: #dadada;
  }

  .page {
    height: 25px;
    background: none;
    border: 0;
  }
`

const Splitter = styled.div`
  width: 7px;
  border-right: 2px solid #cdcdcd;
`

const Stage = styled.div`
  flex: 1;
  position: relative;
  padding: 13px 159px 0 161px;
  margin-bottom: 4px;
  border-bottom: 1px solid #cdcdcd;
`

const Slide = styled.article`
  aspect-ratio: 16 / 9;
  display: flex;
  flex-direction: column;
  background: #fefefe;
  color: #333;
  box-shadow: 0 0 0 1px #d6d6d6;
`

const SlideMark = styled.div`
  display: flex;
  gap: 4px;
  margin-top: 34px;

  i {
    width: 52px;
    height: 58px;
    background: #d9d9d9;
  }

  i + i {
    width: 7px;
  }
`

const SlideTitle = styled.h1`
  margin-top: 47px;
  text-align: center;
  font-family: "Noto Sans CJK SC", sans-serif;
  font-size: 73px;
  line-height: 88px;
  font-weight: 300;
  color: #111;

  span {
    font-family: Lato, sans-serif;
    font-size: 64px;
    font-weight: 400;
  }
`

const Lecturer = styled.p`
  margin-top: 223px;
  padding-right: calc(25% + 4px);
  text-align: right;
  font-size: 24px;
  line-height: 34px;
`

const SlideFoot = styled.footer`
  margin-top: auto;
  display: flex;
  align-items: flex-end;
  border-bottom: 7px solid #6b6b6b;
`

const FootLeft = styled.div`
  flex: 1;
  height: 94px;
  padding-left: 48px;
  display: flex;
  align-items: center;
  gap: 9px;
  background: #dcdcdc;

  p {
    margin-left: 10px;
    padding-left: 21px;
    font-size: 24px;
    line-height: 56px;
    border-left: 1px solid #b0b0b0;
  }
`

const Brand = styled.div`
  display: flex;
  flex-direction: column;
  padding-top: 4px;
  color: #3d8acb;

  b {
    font-size: 31px;
    line-height: 34px;
    font-weight: 500;
  }

  span {
    font-size: 23px;
    line-height: 22px;
  }
`

const FootRight = styled.div`
  width: 49%;
  height: 96px;
  padding-left: 9px;
  font-size: 24px;
  line-height: 94px;
  font-weight: 700;
  color: #fff;
  background: ${COLOR.BLUE};
`

const Pointer = styled(Svg)`
  position: absolute;
  left: 398px;
  top: 426px;
`

const StatusBar = styled.div`
  flex: none;
  height: 30px;
  padding: 0 6px 0 12px;
  display: flex;
  align-items: center;
  gap: 25px;
  background: #f2f2f2;
`

const StatusText = styled.span`
  color: #5a5a5a;
`

const StatusButton = styled.button`
  display: flex;
  align-items: center;
  gap: 4px;
  color: #5a5a5a;
`

const StatusTools = styled.div`
  margin-left: auto;
  display: flex;
  gap: 28px;
`

const Views = styled.div`
  align-self: stretch;
  display: flex;

  button {
    width: 53px;
    display: flex;
    align-items: center;
    justify-content: center;
    color: #666;
  }

  .on {
    background: #c9c9c9;
  }

  button:last-child {
    width: 41px;
    padding-left: 14px;
  }
`

const NetMeter = styled.div`
  width: 288px;
  height: 30px;
  margin-left: -25px;
  padding-left: 14px;
  display: flex;
  align-items: center;
  background: linear-gradient(#4a8de8, #2768dc);
  border-radius: 6px;
  color: #d6e6fb;
  overflow: hidden;

  span {
    width: 94px;
    text-align: center;
  }

  b {
    flex: 1;
    line-height: 30px;
    text-align: center;
    font-weight: 400;
    background: #5c9cec;
    border-left: 1px solid #8fbcf3;
  }
`

const Task = styled.div`
  flex: none;
  height: 57px;
  display: flex;
  background: #020204;
  border-top: 1px solid #555;
  color: #eee;
`

const AppButton = styled.button`
  width: ${props => props.$width}px;
  margin-right: ${props => props.$first ? 3 : 0}px;
  padding-top: 1px;
  display: flex;
  align-items: center;
  justify-content: center;
  ${props => props.$open && css`
    background: linear-gradient(#76b9ed, #76b9ed) center bottom / 56px 3px no-repeat;
  `}
`

const Tray = styled.div`
  margin-left: auto;
  padding: 0 31px 0 0;
  display: flex;
  align-items: center;
  gap: 11px;

  span {
    margin: 0 4px 0 3px;
  }

  time {
    width: 84px;
    margin-right: 16px;
    text-align: center;
    line-height: 26px;
  }
`

export default App;
